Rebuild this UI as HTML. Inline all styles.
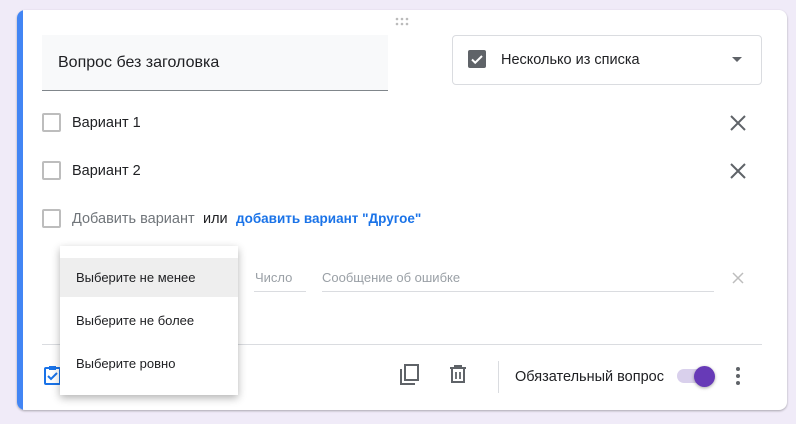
<!DOCTYPE html>
<html><head><meta charset="utf-8"><style>
*{box-sizing:border-box;margin:0;padding:0}
body{width:796px;height:424px;background:#f0ebf8;font-family:"Liberation Sans",Roboto,sans-serif;position:relative;overflow:hidden;color:#202124}
.card{position:absolute;left:17px;top:10px;width:770px;height:400px;background:#fff;border-radius:8px;box-shadow:0 1px 2px rgba(0,0,0,.3);overflow:hidden}
.strip{position:absolute;left:0;top:0;width:6px;height:100%;background:#4285f4}
.abs{position:absolute}
.cb{position:absolute;width:19px;height:19px;border:2px solid #bdbdbd;border-radius:2px}
.t{position:absolute;font-size:14.5px;white-space:nowrap}
</style></head><body>
<div class="card"><div class="strip"></div></div>
<svg class="abs" style="left:394px;top:17px" width="18" height="10"><g fill="#bbb"><circle cx="3" cy="2" r="1.3"/><circle cx="8" cy="2" r="1.3"/><circle cx="13" cy="2" r="1.3"/><circle cx="3" cy="7" r="1.3"/><circle cx="8" cy="7" r="1.3"/><circle cx="13" cy="7" r="1.3"/></g></svg>
<div class="abs" style="left:42px;top:35px;width:346px;height:56px;background:#f8f9fa;border-bottom:1px solid #80868b"></div>
<div class="t" style="left:58px;top:54px;font-size:16px">Вопрос без заголовка</div>
<div class="abs" style="left:452px;top:35px;width:310px;height:50px;border:1px solid #dadce0;border-radius:4px"></div>
<svg class="abs" style="left:468px;top:50px" width="19" height="19"><rect width="18" height="18" rx="2" fill="#5f6368"/><path d="M4 9.5l3.2 3.2L14 6" stroke="#fff" stroke-width="2" fill="none"/></svg>
<div class="t" style="left:501px;top:52px">Несколько из списка</div>
<svg class="abs" style="left:732px;top:57px" width="11" height="6"><path d="M0 0h10L5 5z" fill="#5f6368"/></svg>
<div class="cb" style="left:42px;top:113px"></div><div class="t" style="left:72px;top:115px">Вариант 1</div>
<div class="cb" style="left:42px;top:161px"></div><div class="t" style="left:72px;top:163px">Вариант 2</div>
<div class="cb" style="left:42px;top:209px"></div>
<div class="t" style="left:72px;top:211px;color:#70757a">Добавить вариант</div>
<div class="t" style="left:203px;top:211px">или</div>
<div class="t" style="left:236px;top:211px;color:#1a73e8;font-weight:bold;font-size:13.5px">добавить вариант "Другое"</div>
<svg class="abs" style="left:730px;top:115px" width="16" height="16"><path d="M1 1l14 14M15 1L1 15" stroke="#5f6368" stroke-width="2"/></svg>
<svg class="abs" style="left:730px;top:163px" width="16" height="16"><path d="M1 1l14 14M15 1L1 15" stroke="#5f6368" stroke-width="2"/></svg>
<div class="t" style="left:255px;top:270px;font-size:13px;color:#9aa0a6">Число</div>
<div class="abs" style="left:254px;top:291px;width:52px;height:1px;background:#dadce0"></div>
<div class="t" style="left:322px;top:270px;font-size:13px;color:#9aa0a6">Сообщение об ошибке</div>
<div class="abs" style="left:322px;top:291px;width:392px;height:1px;background:#dadce0"></div>
<svg class="abs" style="left:732px;top:272px" width="12" height="12"><path d="M1 1l10 10M11 1L1 11" stroke="#bdbdbd" stroke-width="1.5"/></svg>
<div class="abs" style="left:42px;top:344px;width:720px;height:1px;background:#dadce0"></div>
<svg class="abs" style="left:43px;top:364px" width="22" height="22"><rect x="2" y="4" width="15" height="16" rx="1" fill="none" stroke="#1a73e8" stroke-width="2"/><rect x="6" y="2" width="7" height="4" fill="#1a73e8"/><path d="M5 12l3 3 6-6" stroke="#1a73e8" stroke-width="2" fill="none"/></svg>
<svg class="abs" style="left:399px;top:364px" width="22" height="22"><path d="M2 5v15h14" stroke="#5f6368" stroke-width="2" fill="none"/><rect x="6" y="1" width="13" height="15" fill="none" stroke="#5f6368" stroke-width="2"/></svg>
<svg class="abs" style="left:449px;top:365px" width="18" height="19"><path d="M1 3h16M6 3V1h6v2" stroke="#5f6368" stroke-width="2" fill="none"/><path d="M3 4v13h12V4" stroke="#5f6368" stroke-width="2" fill="none"/><path d="M7 7v7M11 7v7" stroke="#5f6368" stroke-width="1.8"/></svg>
<div class="abs" style="left:498px;top:361px;width:1px;height:32px;background:#dadce0"></div>
<div class="t" style="left:515px;top:369px">Обязательный вопрос</div>
<div class="abs" style="left:677px;top:369px;width:36px;height:14px;border-radius:7px;background:#d9d0ec"></div>
<div class="abs" style="left:694px;top:366px;width:21px;height:21px;border-radius:50%;background:#673ab7;box-shadow:0 1px 3px rgba(0,0,0,.35)"></div>
<svg class="abs" style="left:734px;top:366px" width="8" height="20"><g fill="#5f6368"><circle cx="4" cy="3" r="2"/><circle cx="4" cy="10" r="2"/><circle cx="4" cy="17" r="2"/></g></svg>
<div class="abs" style="left:60px;top:246px;width:178px;height:149px;background:#fff;box-shadow:0 3px 8px rgba(0,0,0,.3)"></div>
<div class="abs" style="left:60px;top:258px;width:178px;height:39px;background:#eeeeee"></div>
<div class="t" style="left:76px;top:270px;font-size:13px">Выберите не менее</div>
<div class="t" style="left:76px;top:313px;font-size:13px">Выберите не более</div>
<div class="t" style="left:76px;top:356px;font-size:13px">Выберите ровно</div>
</body></html>
